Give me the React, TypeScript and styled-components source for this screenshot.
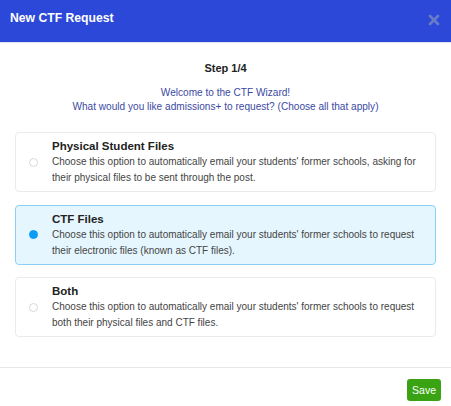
import * as React from 'react'
import styled, { createGlobalStyle } from 'styled-components'

const GlobalStyle = createGlobalStyle`
  html, body {
    margin: 0;
    padding: 0;
    background: #fff;
    font-family: 'Liberation Sans', Arial, sans-serif;
  }
`

const Modal = styled.div`
  width: 451px;
  height: 406px;
  display: flex;
  flex-direction: column;
  background: #fff;
`

const Header = styled.div`
  height: 42px;
  flex: none;
  display: flex;
  align-items: center;
  justify-content: space-between;
  padding: 0 11px 0 10px;
  background: #2b48d9;
  border-bottom: 1px solid #dfe3f5;
`

const Title = styled.h1`
  margin: -7px 0 0;
  font-size: 12.2px;
  font-weight: 700;
  color: #fff;
`

const Close = styled.button`
  border: 0;
  background: none;
  padding: 0;
  width: 12px;
  height: 12px;
  margin-top: -2px;
  display: flex;
`

const Body = styled.div`
  flex: 1;
  padding: 18px 15px 0;
  display: flex;
  flex-direction: column;
`

const Step = styled.div`
  text-align: center;
  font-size: 11px;
  font-weight: 700;
  color: #222;
  line-height: 14px;
`

const Intro = styled.div`
  margin-top: 11px;
  text-align: center;
  font-size: 10.1px;
  line-height: 14px;
  color: #3b4aa3;
`

const Options = styled.div`
  margin-top: 18px;
  display: flex;
  flex-direction: column;
  gap: 12.5px;
`

const Card = styled.label<{ $selected?: boolean }>`
  height: 60px;
  box-sizing: border-box;
  display: flex;
  align-items: center;
  border: 1px solid ${p => (p.$selected ? '#8ad0f5' : '#e9ebee')};
  background: ${p => (p.$selected ? '#e6f6fe' : '#fff')};
  border-radius: 4px;
  cursor: pointer;
`

const Radio = styled.span<{ $checked?: boolean }>`
  flex: none;
  width: 9px;
  height: 9px;
  box-sizing: border-box;
  margin: 0 14px 0 13px;
  border-radius: 50%;
  border: 1px solid ${p => (p.$checked ? '#0b9cf6' : '#d5d8dc')};
  background: ${p => (p.$checked ? '#0b9cf6' : '#fff')};
`

const Text = styled.div`
  display: flex;
  flex-direction: column;
`

const OptionTitle = styled.div`
  font-size: 11.5px;
  font-weight: 700;
  color: #222;
  line-height: 16px;
`

const OptionDesc = styled.div`
  font-size: 10px;
  line-height: 16px;
  color: #444;
`

const Footer = styled.div`
  flex: none;
  height: 39px;
  box-sizing: border-box;
  border-top: 1px solid #e8e8e8;
  display: flex;
  align-items: flex-start;
  justify-content: flex-end;
  padding: 11px 10px 0;
`

const SaveButton = styled.button`
  height: 22px;
  padding: 0 5px;
  border: 0;
  border-radius: 3px;
  background: #3aa313;
  color: #fff;
  font-family: inherit;
  font-size: 10.5px;
`

const options = [
  {
    title: 'Physical Student Files',
    lines: [
      "Choose this option to automatically email your students' former schools, asking for",
      'their physical files to be sent through the post.',
    ],
  },
  {
    title: 'CTF Files',
    lines: [
      "Choose this option to automatically email your students' former schools to request",
      'their electronic files (known as CTF files).',
    ],
    selected: true,
  },
  {
    title: 'Both',
    lines: [
      "Choose this option to automatically email your students' former schools to request",
      'both their physical files and CTF files.',
    ],
  },
]

export default function App() {
  return (
    <>
      <GlobalStyle />
      <Modal>
        <Header>
          <Title>New CTF Request</Title>
          <Close aria-label="Close">
            <svg width="12" height="12" viewBox="0 0 12 12">
              <path d="M2 2 L10 10 M10 2 L2 10" stroke="#6a7cc6" strokeWidth="2.6" strokeLinecap="round" />
            </svg>
          </Close>
        </Header>
        <Body>
          <Step>Step 1/4</Step>
          <Intro>
            Welcome to the CTF Wizard!
            <br />
            What would you like admissions+ to request? (Choose all that apply)
          </Intro>
          <Options>
            {options.map(o => (
              <Card key={o.title} $selected={o.selected}>
                <Radio $checked={o.selected} />
                <Text>
                  <OptionTitle>{o.title}</OptionTitle>
                  <OptionDesc>
                    {o.lines[0]}
                    <br />
                    {o.lines[1]}
                  </OptionDesc>
                </Text>
              </Card>
            ))}
          </Options>
        </Body>
        <Footer>
          <SaveButton>Save</SaveButton>
        </Footer>
      </Modal>
    </>
  )
}
